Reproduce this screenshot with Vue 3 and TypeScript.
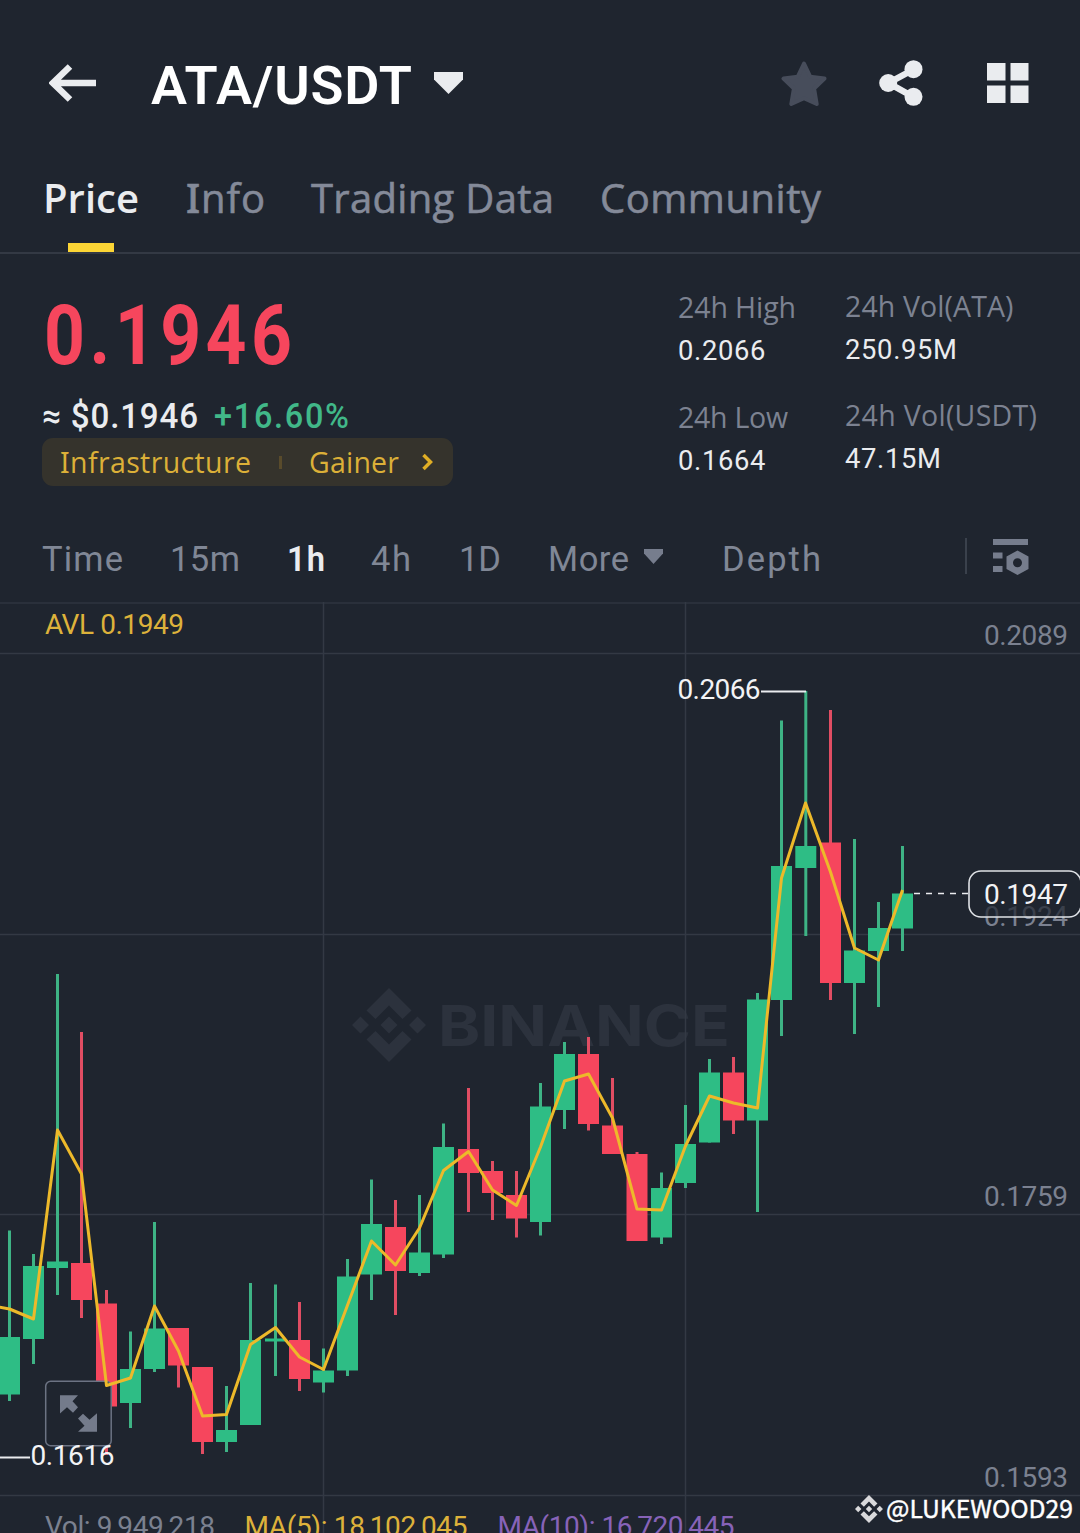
<script setup lang="ts">
import type { Directive } from 'vue'

type Fit = [width: number, squeeze?: number]

// Tracks a label out (or in) so that it fills the given width; squeeze narrows the glyphs.
const vFit: Directive<HTMLElement, Fit> = {
  mounted(el, { value: [width, squeeze = 1] }) {
    const natural = el.getBoundingClientRect().width
    const count = (el.textContent ?? '').trim().length
    const inner = width / squeeze
    el.style.letterSpacing = `${(inner - natural) / Math.max(1, count - 1)}px`
    el.style.width = `${inner}px`
    el.style.marginRight = `${width - inner}px`
    el.style.transform = `scaleX(${squeeze})`
  },
}

const tabs: { label: string; width: number; active?: boolean }[] = [
  { label: 'Price', width: 97, active: true },
  { label: 'Info', width: 79 },
  { label: 'Trading Data', width: 243 },
  { label: 'Community', width: 221 },
]

const stats: { label: string; labelWidth: number; value: string; valueWidth: number }[][] = [
  [
    { label: '24h High', labelWidth: 118, value: '0.2066', valueWidth: 87.5 },
    { label: '24h Low', labelWidth: 110, value: '0.1664', valueWidth: 87.5 },
  ],
  [
    { label: '24h Vol(ATA)', labelWidth: 168.5, value: '250.95M', valueWidth: 112 },
    { label: '24h Vol(USDT)', labelWidth: 192, value: '47.15M', valueWidth: 96 },
  ],
]

// x centre, wick top, body top, body bottom, wick bottom, rising
type Candle = [number, number, number, number, number, 0 | 1]
const candles: Candle[] = [
  [9.5, 1230.5, 1337, 1394.5, 1401, 1],
  [33.5, 1254, 1266, 1339, 1364, 1],
  [57.5, 974, 1261.5, 1268, 1295, 1],
  [81.5, 1032, 1263, 1300, 1318, 0],
  [106.5, 1290, 1303.5, 1406.5, 1455, 0],
  [130.5, 1331.5, 1369, 1403, 1428, 1],
  [154.5, 1222, 1328.5, 1369, 1372, 1],
  [178.5, 1328, 1328, 1365.5, 1387.5, 0],
  [202.5, 1367, 1367, 1442, 1454, 0],
  [226.5, 1386, 1430, 1442, 1452, 1],
  [250.5, 1283, 1340, 1425, 1425, 1],
  [275.5, 1284.5, 1338.5, 1341.5, 1376, 1],
  [299.5, 1302, 1340, 1379, 1391, 0],
  [323.5, 1348.5, 1370.5, 1382.5, 1392.5, 1],
  [347.5, 1259, 1276.5, 1370.5, 1376, 1],
  [371.5, 1179.5, 1224, 1274.5, 1300, 1],
  [395.5, 1200, 1227, 1271, 1315, 0],
  [419.5, 1195, 1252.5, 1273, 1276, 1],
  [443.5, 1123.5, 1147, 1254.5, 1258, 1],
  [468.5, 1088, 1149, 1173, 1212, 0],
  [492.5, 1161, 1171, 1193, 1220, 0],
  [516.5, 1171, 1195, 1218.5, 1237.5, 0],
  [540.5, 1083, 1106.5, 1222, 1235.5, 1],
  [564.5, 1042, 1054, 1110, 1129, 1],
  [588.5, 1037, 1054, 1124, 1130.5, 0],
  [612.5, 1078, 1125.5, 1154, 1154, 0],
  [637, 1152, 1154, 1241, 1241, 0],
  [661.5, 1172.5, 1188, 1237.5, 1244, 1],
  [685.5, 1105, 1144, 1183, 1188, 1],
  [709.5, 1059, 1072.5, 1142.5, 1142.5, 1],
  [733.5, 1057, 1072.5, 1120.5, 1134, 0],
  [757.5, 993, 999.5, 1120.5, 1212, 1],
  [781.5, 720.5, 866, 1000, 1036, 1],
  [805.8, 691, 846, 868, 936, 1],
  [830.5, 710, 842.5, 983, 1000, 0],
  [854.5, 839, 950.5, 983, 1034, 1],
  [878.5, 902, 928, 951, 1007, 1],
  [902.5, 846, 893.5, 928.5, 951, 1],
]

const average: [number, number][] = [
  [-1, 1307], [9.5, 1309], [33.5, 1319], [57.5, 1130], [81.5, 1174], [106.5, 1385.5], [130.5, 1378],
  [154.5, 1306], [178.5, 1351], [202.5, 1416], [226.5, 1414.5], [250.5, 1344.5], [275.5, 1327.5],
  [299.5, 1357], [323.5, 1369.5], [371.5, 1241], [395.5, 1265], [419.5, 1228], [443.5, 1170.5],
  [468.5, 1151.5], [492.5, 1190], [516.5, 1205.5], [540.5, 1147], [564.5, 1081], [588.5, 1074],
  [612.5, 1118], [637, 1209], [661.5, 1210], [685.5, 1146], [709.5, 1096], [733.5, 1103],
  [757.5, 1108], [781.5, 878], [805.5, 803], [830.5, 872], [854.5, 948], [878.5, 960], [902.5, 890],
]
const averagePoints = average.map((p) => p.join(',')).join(' ')

const gridRows = [653.5, 934.5, 1214.5, 1495.5]
const gridColumns = [323.5, 685.5]
const scale: { y: number; text: string }[] = [
  { y: 645, text: '0.2089' },
  { y: 926, text: '0.1924' },
  { y: 1206, text: '0.1759' },
  { y: 1487, text: '0.1593' },
]
</script>

<template>
  <main class="screen">
    <header class="header">
      <svg class="back" width="48" height="40" viewBox="0 0 48 40">
        <path d="M21 3.500 4 20l17 16.500M4 20h43" fill="none" stroke="#eaecef" stroke-width="6.500" />
      </svg>
      <h1 class="title"><span v-fit="[261]" class="fit">ATA/USDT</span></h1>
      <svg class="title-caret" width="29" height="22" viewBox="0 0 29 22">
        <path d="M0 0h29v7.500L14.500 22 0 7.500z" fill="#eaecef" />
      </svg>
      <svg class="star" width="46" height="46" viewBox="0 0 46 46">
        <path
          d="M23 2.500l6.200 13.200 14.300 1.900-10.400 9.900 2.600 15.500L23 37.300 10.300 43l2.600-15.500L2.500 17.600l14.300-1.900z"
          fill="#474d5b" stroke="#474d5b" stroke-width="4" stroke-linejoin="round"
        />
      </svg>
      <svg class="share" width="44" height="46" viewBox="0 0 44 46">
        <path d="M34.500 9.500 9.500 23l25 14" fill="none" stroke="#eaecef" stroke-width="6.500" />
        <circle cx="9.200" cy="23" r="9" fill="#eaecef" />
        <circle cx="34.500" cy="9.200" r="9" fill="#eaecef" />
        <circle cx="34.500" cy="36.800" r="9" fill="#eaecef" />
      </svg>
      <svg class="grid-icon" width="42" height="40" viewBox="0 0 42 40">
        <path d="M0 0h18.500v17.500H0zM23.500 0h18v17.500h-18zM0 22.500h18.500V40H0zM23.500 22.500h18V40h-18z" fill="#eaecef" />
      </svg>
    </header>

    <nav class="tabs">
      <div v-for="tab in tabs" :key="tab.label" class="tab" :class="{ active: tab.active }">
        <span v-fit="[tab.width]" class="fit">{{ tab.label }}</span>
        <i v-if="tab.active" class="underline"></i>
      </div>
    </nav>

    <section class="summary">
      <div class="quote">
        <div class="last"><span v-fit="[248, 0.86]" class="fit">0.1946</span></div>
        <div class="fiat">
          <span v-fit="[156, 0.96]" class="fit">≈ $0.1946</span>
          <span v-fit="[135, 0.94]" class="fit rise">+16.60%</span>
        </div>
        <div class="tags">
          <span v-fit="[191]" class="fit serif-cap">Infrastructure</span>
          <i class="tag-divider"></i>
          <span v-fit="[90]" class="fit">Gainer</span>
          <svg class="chevron" width="11" height="18" viewBox="0 0 11 18">
            <path d="M1.500 2 8.500 9l-7 7" fill="none" stroke="#e0ae25" stroke-width="3.500" />
          </svg>
        </div>
      </div>
      <div v-for="(column, i) in stats" :key="i" class="stats">
        <div v-for="stat in column" :key="stat.label" class="stat">
          <div class="stat-label"><span v-fit="[stat.labelWidth]" class="fit">{{ stat.label }}</span></div>
          <div class="stat-value"><span v-fit="[stat.valueWidth, 0.96]" class="fit">{{ stat.value }}</span></div>
        </div>
      </div>
    </section>

    <nav class="intervals">
      <span v-fit="[81]" class="fit time">Time</span>
      <span v-fit="[70]" class="fit m15">15m</span>
      <span v-fit="[38, 0.95]" class="fit h1">1h</span>
      <span v-fit="[40]" class="fit h4">4h</span>
      <span v-fit="[42]" class="fit d1">1D</span>
      <span v-fit="[81]" class="fit more">More</span>
      <svg class="more-caret" width="19" height="15" viewBox="0 0 19 15">
        <path d="M0 0h19v4.500L9.500 15 0 4.500z" fill="#767d8d" />
      </svg>
      <span v-fit="[99]" class="fit depth">Depth</span>
      <i class="bar"></i>
      <svg class="settings" width="36" height="38" viewBox="0 0 36 38">
        <path d="M0 2h35v6H0zM0 15.500h9.500v6H0zM0 29h9.500v6H0z" fill="#767d8d" />
        <path
          d="M24.500 13.500 35.500 19.500v12.500L24.500 38 13.500 32v-12.500zM24.500 21.200a4.500 4.500 0 1 0 0 9 4.500 4.500 0 1 0 0-9z"
          fill="#767d8d" fill-rule="evenodd"
        />
      </svg>
    </nav>

    <svg class="chart" width="1080" height="931" viewBox="0 602 1080 931">
      <defs>
        <g id="emblem">
          <path d="M37 0 59.500 22.500 50.500 31 37 17.500 23.500 31 14.500 22.500z" />
          <path d="M37 74 59.500 51.500 50.500 43 37 56.500 23.500 43 14.500 51.500z" />
          <path d="M8.500 28.500 17 37l-8.500 8.500L0 37zM37 28.500l8.500 8.500-8.500 8.500-8.500-8.500zM65.500 28.500 74 37l-8.500 8.500L57 37z" />
        </g>
      </defs>

      <g fill="#2c323d">
        <use href="#emblem" x="352" y="988" />
        <text class="brand" x="438" y="1045.500" textLength="292" lengthAdjust="spacingAndGlyphs">BINANCE</text>
      </g>

      <g stroke="#333944" stroke-width="1.500">
        <line x1="0" x2="1080" y1="602.500" y2="602.500" stroke="#2a303b" stroke-width="3" />
        <line v-for="y in gridRows" :key="y" x1="0" x2="1080" :y1="y" :y2="y" />
        <line v-for="x in gridColumns" :key="x" :x1="x" :x2="x" y1="602" y2="1533" />
      </g>

      <g v-for="c in candles" :key="c[0]" :class="c[5] ? 'up' : 'down'">
        <rect class="wick" :x="c[0] - 1.500" :y="c[1]" width="3" :height="c[4] - c[1]" />
        <rect :x="c[0] - 10.500" :y="c[2]" width="21" :height="c[3] - c[2]" />
      </g>

      <g>
        <rect x="45.700" y="1381.200" width="65.500" height="64.500" rx="5" fill="#1f252f" stroke="#6c7383" stroke-width="1.500" />
        <path
          d="M60 1395.300h18l-5.500 6 5.500 6-5 5.400-6-5.500-7 6.200zM97 1431.700H78l6.500-6-6.500-7.300 5-4.700 6.500 6 7.500-6.500z"
          fill="#747b8b"
        />
      </g>

      <polyline :points="averagePoints" fill="none" stroke="#edb92a" stroke-width="3" stroke-linejoin="round" />

      <g class="label muted">
        <text v-for="s in scale" :key="s.y" x="984" :y="s.y" textLength="84">{{ s.text }}</text>
      </g>
      <g class="label bright">
        <text x="677.500" y="699" textLength="83">0.2066</text>
        <text x="30.500" y="1465" textLength="84">0.1616</text>
        <path d="M761 691.500h45M0 1457.500h30" stroke="#eaecef" stroke-width="1.800" />
        <path d="M914 893.500h54" stroke="#eaecef" stroke-width="1.500" stroke-dasharray="6 6" />
        <rect x="969" y="871" width="112" height="46" rx="12" fill="#1f252f" fill-opacity="0.700" stroke="#dfe2e6" stroke-width="1.600" />
        <text x="984" y="904" textLength="84">0.1947</text>
      </g>
      <text class="label gold" x="45" y="634" textLength="139">AVL 0.1949</text>
      <text class="label muted" x="45" y="1536" textLength="170">Vol: 9,949,218</text>
      <text class="label gold" x="244.500" y="1536" textLength="223">MA(5): 18,102,045</text>
      <text class="label violet" x="497.500" y="1536" textLength="237">MA(10): 16,720,445</text>

      <use href="#emblem" transform="translate(855 1495) scale(0.378)" fill="#d9d9db" />
      <text class="author" x="886" y="1518" textLength="187" lengthAdjust="spacingAndGlyphs">@LUKEWOOD29</text>
    </svg>
  </main>
</template>

<style>
body {
  margin: 0;
  background: #1f252f;
}
</style>

<style scoped>
.screen {
  width: 1080px;
  height: 1533px;
  overflow: hidden;
  background: #1f252f;
  color: #eaecef;
  font-family: Roboto, "Noto Sans", sans-serif;
}
svg {
  display: block;
  flex: none;
}
.fit {
  display: inline-block;
  flex: none;
  white-space: nowrap;
  transform-origin: 0 50%;
}
.header {
  display: flex;
  align-items: center;
  height: 167px;
  padding: 0 0 1px 49px;
  box-sizing: border-box;
}
.title {
  margin: 5px 0 0 54px;
  font-size: 54px;
  line-height: 64px;
  font-weight: 600;
  color: #fff;
}
.title-caret {
  margin-left: 22px;
}
.star {
  margin: 1px 0 0 318px;
}
.share {
  margin-left: 52px;
}
.grid-icon {
  margin-left: 64px;
}
.tabs {
  display: flex;
  gap: 46px;
  height: 85px;
  padding-left: 42px;
  border-bottom: 2px solid #333944;
  font-family: "Open Sans", sans-serif;
  font-size: 40px;
  line-height: 61px;
  font-weight: 500;
  color: #848a99;
  -webkit-text-stroke: 0.6px currentColor;
}
.tab {
  display: flex;
  flex-direction: column;
  align-items: center;
  justify-content: space-between;
}
.tab.active {
  color: #eaecef;
  font-weight: 600;
  -webkit-text-stroke: 0;
}
.tab.active .fit {
  padding-left: 1px;
}
.underline {
  width: 46px;
  height: 9px;
  background: #fcd535;
}
.tab:nth-child(2) .fit::first-letter,
.serif-cap::first-letter {
  font-family: "Noto Sans", sans-serif;
}
.summary {
  display: flex;
  height: 262px;
  padding-left: 42px;
}
.quote {
  width: 636px;
  padding-top: 40px;
}
.last {
  height: 83px;
  padding-left: 2px;
  font-size: 83px;
  line-height: 83px;
  font-weight: 700;
  color: #f6465d;
}
.fiat {
  display: flex;
  gap: 16px;
  height: 44px;
  margin-top: 17px;
  font-size: 34.500px;
  line-height: 44px;
  font-weight: 500;
}
.rise {
  color: #41b889;
}
.tags {
  display: flex;
  align-items: center;
  width: 411px;
  height: 48px;
  padding-left: 18px;
  box-sizing: border-box;
  border-radius: 11px;
  background: #35332c;
  font-family: "Open Sans", sans-serif;
  font-size: 28.500px;
  line-height: 48px;
  color: #dcb038;
}
.tag-divider {
  width: 3px;
  height: 13px;
  margin: 0 27px 0 28px;
  background: #594b2b;
}
.chevron {
  margin-left: 23px;
}
.stats {
  width: 167px;
  padding-top: 33px;
}
.stats + .stats {
  padding-top: 32px;
}
.stat {
  height: 110px;
}
.stats + .stats .stat {
  height: 109px;
}
.stat-label {
  height: 40px;
  font-family: "Open Sans", sans-serif;
  font-size: 28.500px;
  line-height: 40px;
  color: #7c8291;
}
.stat-value {
  height: 48px;
  font-size: 28.500px;
  line-height: 48px;
}
.intervals {
  display: flex;
  align-items: center;
  height: 86px;
  padding-left: 42px;
  font-size: 34.500px;
  line-height: 86px;
  color: #808796;
}
.m15 { margin-left: 47px; }
.intervals .h1 { color: #eaecef; font-weight: 600; }
.more-caret { margin: 0 0 6px 15px; }
.h1 { margin-left: 47px; }
.h4 { margin-left: 46px; }
.d1 { margin-left: 48px; }
.more { margin-left: 47px; }
.depth { margin-left: 59px; }
.bar {
  width: 2px;
  height: 36px;
  margin: 0 26px 6px auto;
  background: #3a414c;
}
.settings {
  margin: 0 51px 6px 0;
}
.up { fill: #2ebd85; }
.down { fill: #f6465d; }
.up .wick { fill: #3eb385; }
.down .wick { fill: #e04d63; }
.label {
  font-family: Roboto, sans-serif;
  font-size: 28px;
}
.muted { fill: #7b8190; }
.bright { fill: #f2f3f5; }
.gold { fill: #ddb23b; }
.violet { fill: #8763b8; }
.brand {
  font-family: Inter, sans-serif;
  font-size: 56.500px;
  font-weight: 700;
}
.author {
  font-family: "Noto Sans CJK SC", sans-serif;
  font-size: 24.500px;
  font-weight: 400;
  fill: #fff;
  stroke: #fff;
  stroke-width: 0.400px;
}
</style>
